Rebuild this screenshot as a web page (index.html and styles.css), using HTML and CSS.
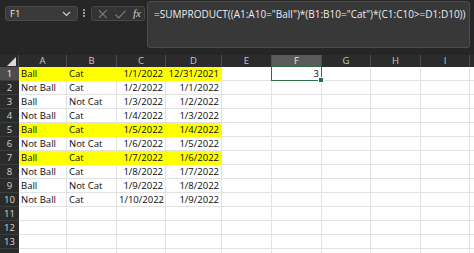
FILE: index.html
```html
<!DOCTYPE html>
<html>
<head>
<meta charset="utf-8">
<link rel="stylesheet" href="styles.css">
</head>
<body>
<div class="app">
  <div class="toolbar">
    <div class="namebox">
      <span class="ref">F1</span>
      <svg class="chev" width="9" height="6" viewBox="0 0 9 6"><path d="M1 1 L4.5 4.5 L8 1" fill="none" stroke="#cfcfcf" stroke-width="1.2"/></svg>
    </div>
    <div class="grip"><i></i><i></i><i></i></div>
    <div class="btns">
      <svg width="12" height="12" viewBox="0 0 12 12"><path d="M2 2 L10 10 M10 2 L2 10" stroke="#7a7a7a" stroke-width="1.3"/></svg>
      <svg width="13" height="12" viewBox="0 0 13 12"><path d="M1.5 6.5 L5 10 L12 2.5" fill="none" stroke="#7a7a7a" stroke-width="1.3"/></svg>
      <span class="fx">fx</span>
    </div>
    <div class="formula">=SUMPRODUCT((A1:A10="Ball")*(B1:B10="Cat")*(C1:C10&gt;=D1:D10))</div>
  </div>
  <div class="sheet">
    <div class="ch corner"><svg width="9" height="9" viewBox="0 0 9 9"><path d="M9 0 L9 9 L0 9 Z" fill="#d9d9d9"/></svg></div>
    <div class="ch">A</div><div class="ch">B</div><div class="ch">C</div><div class="ch">D</div><div class="ch">E</div><div class="ch selh">F</div><div class="ch">G</div><div class="ch">H</div><div class="ch">I</div><div class="ch last"></div>

    <div class="rh selr">1</div><div class="c y">Ball</div><div class="c y">Cat</div><div class="c y n">1/1/2022</div><div class="c y n">12/31/2021</div><div class="c"></div><div class="c n sel">3</div><div class="c"></div><div class="c"></div><div class="c"></div><div class="c"></div>
    <div class="rh">2</div><div class="c">Not Ball</div><div class="c">Cat</div><div class="c n">1/2/2022</div><div class="c n">1/1/2022</div><div class="c"></div><div class="c"></div><div class="c"></div><div class="c"></div><div class="c"></div><div class="c"></div>
    <div class="rh">3</div><div class="c">Ball</div><div class="c">Not Cat</div><div class="c n">1/3/2022</div><div class="c n">1/2/2022</div><div class="c"></div><div class="c"></div><div class="c"></div><div class="c"></div><div class="c"></div><div class="c"></div>
    <div class="rh">4</div><div class="c">Not Ball</div><div class="c">Cat</div><div class="c n">1/4/2022</div><div class="c n">1/3/2022</div><div class="c"></div><div class="c"></div><div class="c"></div><div class="c"></div><div class="c"></div><div class="c"></div>
    <div class="rh">5</div><div class="c y">Ball</div><div class="c y">Cat</div><div class="c y n">1/5/2022</div><div class="c y n">1/4/2022</div><div class="c"></div><div class="c"></div><div class="c"></div><div class="c"></div><div class="c"></div><div class="c"></div>
    <div class="rh">6</div><div class="c">Not Ball</div><div class="c">Not Cat</div><div class="c n">1/6/2022</div><div class="c n">1/5/2022</div><div class="c"></div><div class="c"></div><div class="c"></div><div class="c"></div><div class="c"></div><div class="c"></div>
    <div class="rh">7</div><div class="c y">Ball</div><div class="c y">Cat</div><div class="c y n">1/7/2022</div><div class="c y n">1/6/2022</div><div class="c"></div><div class="c"></div><div class="c"></div><div class="c"></div><div class="c"></div><div class="c"></div>
    <div class="rh">8</div><div class="c">Not Ball</div><div class="c">Cat</div><div class="c n">1/8/2022</div><div class="c n">1/7/2022</div><div class="c"></div><div class="c"></div><div class="c"></div><div class="c"></div><div class="c"></div><div class="c"></div>
    <div class="rh">9</div><div class="c">Ball</div><div class="c">Not Cat</div><div class="c n">1/9/2022</div><div class="c n">1/8/2022</div><div class="c"></div><div class="c"></div><div class="c"></div><div class="c"></div><div class="c"></div><div class="c"></div>
    <div class="rh">10</div><div class="c">Not Ball</div><div class="c">Cat</div><div class="c n">1/10/2022</div><div class="c n">1/9/2022</div><div class="c"></div><div class="c"></div><div class="c"></div><div class="c"></div><div class="c"></div><div class="c"></div>
    <div class="rh">11</div><div class="c"></div><div class="c"></div><div class="c"></div><div class="c"></div><div class="c"></div><div class="c"></div><div class="c"></div><div class="c"></div><div class="c"></div><div class="c"></div>
    <div class="rh">12</div><div class="c"></div><div class="c"></div><div class="c"></div><div class="c"></div><div class="c"></div><div class="c"></div><div class="c"></div><div class="c"></div><div class="c"></div><div class="c"></div>
    <div class="rh">13</div><div class="c"></div><div class="c"></div><div class="c"></div><div class="c"></div><div class="c"></div><div class="c"></div><div class="c"></div><div class="c"></div><div class="c"></div><div class="c"></div>
    <div class="rh"></div><div class="c"></div><div class="c"></div><div class="c"></div><div class="c"></div><div class="c"></div><div class="c"></div><div class="c"></div><div class="c"></div><div class="c"></div><div class="c"></div>
  </div>
</div>
</body>
</html>
```

FILE: styles.css
```css
* { box-sizing: border-box; }
html, body { margin: 0; padding: 0; background: #ffffff; overflow: hidden; }
body { width: 474px; height: 253px; font-family: "Open Sans", "Noto Sans", sans-serif; }
.app { width: 474px; height: 253px; display: flex; flex-direction: column; background: #262626; }

.toolbar { height: 55px; display: flex; align-items: flex-start; padding: 0 4px 0 5px; flex-shrink: 0; }
.namebox { margin-top: 6px; width: 73px; height: 15px; background: #3a3a3a; border: 1px solid #4a4a4a; border-radius: 3px; display: flex; align-items: center; justify-content: space-between; padding: 0 6px 0 4px; }
.ref { color: #ececec; font-size: 9.5px; line-height: 13px; }
.grip { margin: 9px 0 0 5px; width: 3px; display: flex; flex-direction: column; gap: 1.5px; }
.grip i { display: block; width: 1.5px; height: 1.5px; background: #9a9a9a; }
.btns { margin: 6px 0 0 5px; width: 54px; height: 15px; border: 1px solid #474747; background: #333333; border-radius: 3px; display: flex; align-items: center; gap: 5px; padding: 0 3px 0 5px; }
.fx { font-family: "Liberation Serif", serif; font-style: italic; color: #d0d0d0; font-size: 11px; line-height: 13px; margin-left: 2px; }
.formula { margin: 1px 0 0 2px; flex: 1; height: 47px; background: #383838; border: 1px solid #4c4c4c; border-radius: 3px; color: #ececec; font-size: 10px; line-height: 14px; padding: 5px 0 0 6px; white-space: nowrap; overflow: hidden; }

.sheet { display: grid; grid-template-columns: 19px 48px 50px 49px 56px 50px 50px 49px 50px 49px 1fr; grid-template-rows: 12px repeat(14, 14px); background: #ffffff; }
.ch { background: #2b2b2b; color: #c8c8c8; font-size: 9.5px; line-height: 12px; text-align: center; border-right: 1px solid #4e4e4e; }
.ch.corner { display: flex; align-items: flex-end; justify-content: flex-end; padding: 0 2px 1px 0; }
.ch.selh { background: #5a5a5a; color: #e4e4e4; border-bottom: 1px solid #6f9f84; }
.ch.last { border-right: none; }
.rh { background: #2b2b2b; color: #d4d4d4; font-size: 9.5px; line-height: 14px; text-align: center; border-bottom: 1px solid #3c3c3c; }
.rh.selr { background: #4d4d4d; color: #eeeeee; }
.c { color: #0a0a0a; font-size: 9.5px; line-height: 14px; padding: 0 2px; white-space: nowrap; overflow: visible; border-right: 1px solid #e2e2e2; border-bottom: 1px solid #e2e2e2; }
.c.n { text-align: right; }
.c.y { background: #ffff00; border-color: #ffff00; }
.c.sel { position: relative; }
.c.sel::before { content: ""; position: absolute; left: -1px; top: -1px; right: -1px; bottom: -1px; border: 1.5px solid #2b6b47; }
.c.sel::after { content: ""; position: absolute; right: -3px; bottom: -3px; width: 4px; height: 4px; background: #2b6b47; border: 1px solid #ffffff; }
```
